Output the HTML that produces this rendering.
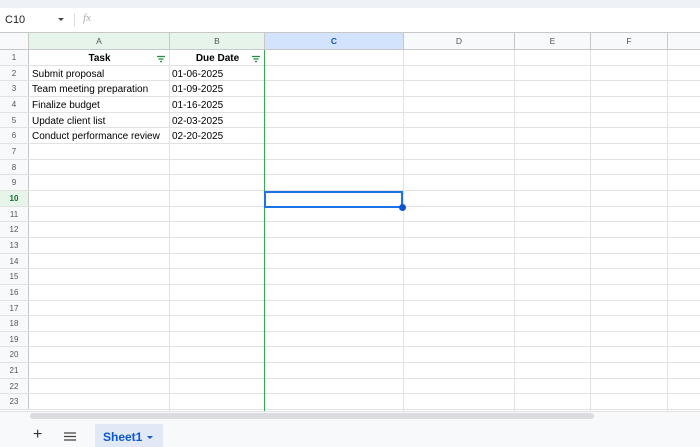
<!DOCTYPE html>
<html><head><meta charset="utf-8"><style>
*{box-sizing:border-box;margin:0;padding:0}
body{width:700px;height:447px;overflow:hidden;background:#fff;font-family:"Liberation Sans",Arial,sans-serif;position:relative}
.top{position:absolute;left:0;top:0;width:700px;height:8px;background:#eef1f6}
.fb{position:absolute;left:0;top:8px;width:700px;height:25px;background:#fff;border-bottom:1px solid #c7c7c7}
.abs{position:absolute}
.rows{position:absolute;left:0;top:50px;width:700px}
.r{height:15.667px;position:relative;border-bottom:1px solid #e2e2e2;font-size:10px;color:#000}
.rn{position:absolute;left:0;top:0;width:29px;height:100%;background:#f8f9fa;border-right:1px solid #c7c7c7;font-size:8px;color:#555;text-align:center;line-height:16px}
.g .rn{background:#e6f4ea}
.c{position:absolute;top:1px;line-height:16px;white-space:nowrap}
.vl{position:absolute;top:33px;height:378px;width:1px;background:#e2e2e2}
.ch{position:absolute;top:33px;height:17px;border-right:1px solid #c7c7c7;border-bottom:1px solid #c7c7c7;background:#f8f9fa;font-size:8.5px;color:#555;text-align:center;line-height:17px}
</style></head><body>
<div class="top"></div>
<div class="fb">
<div class="abs" style="left:5px;top:6px;font-size:11px;color:#222">C10</div>
<div class="abs" style="left:58px;top:10px;width:0;height:0;border-left:3px solid transparent;border-right:3px solid transparent;border-top:3px solid #444"></div>
<div class="abs" style="left:74px;top:5px;width:1px;height:14px;background:#ddd"></div>
<div class="abs" style="left:83px;top:4px;font-size:11px;color:#aaa;font-style:italic;font-family:'Liberation Serif',serif">fx</div>
</div>
<div class="ch" style="left:0;width:29px;background:#f8f9fa"></div>
<div class="ch" style="left:29px;width:141px;background:#e6f4ea">A</div>
<div class="ch" style="left:170px;width:95px;background:#e6f4ea">B</div>
<div class="ch" style="left:265px;width:139px;background:#d3e3fd;color:#0b57d0;font-weight:bold">C</div>
<div class="ch" style="left:404px;width:111px">D</div>
<div class="ch" style="left:515px;width:76px">E</div>
<div class="ch" style="left:591px;width:77px">F</div>
<div class="ch" style="left:668px;width:40px"></div>
<div class="rows">
<div class="r"><div class="rn">1</div><div class="c" style="left:29px;width:141px;text-align:center;font-weight:bold">Task</div><div class="c" style="left:170px;width:95px;text-align:center;font-weight:bold">Due Date</div></div>
<div class="r"><div class="rn">2</div><div class="c" style="left:32px">Submit proposal</div><div class="c" style="left:172px">01-06-2025</div></div>
<div class="r"><div class="rn">3</div><div class="c" style="left:32px">Team meeting preparation</div><div class="c" style="left:172px">01-09-2025</div></div>
<div class="r"><div class="rn">4</div><div class="c" style="left:32px">Finalize budget</div><div class="c" style="left:172px">01-16-2025</div></div>
<div class="r"><div class="rn">5</div><div class="c" style="left:32px">Update client list</div><div class="c" style="left:172px">02-03-2025</div></div>
<div class="r"><div class="rn">6</div><div class="c" style="left:32px">Conduct performance review</div><div class="c" style="left:172px">02-20-2025</div></div>
<div class="r"><div class="rn">7</div></div>
<div class="r"><div class="rn">8</div></div>
<div class="r"><div class="rn">9</div></div>
<div class="r g"><div class="rn" style="color:#146c2e;font-weight:bold">10</div></div>
<div class="r"><div class="rn">11</div></div>
<div class="r"><div class="rn">12</div></div>
<div class="r"><div class="rn">13</div></div>
<div class="r"><div class="rn">14</div></div>
<div class="r"><div class="rn">15</div></div>
<div class="r"><div class="rn">16</div></div>
<div class="r"><div class="rn">17</div></div>
<div class="r"><div class="rn">18</div></div>
<div class="r"><div class="rn">19</div></div>
<div class="r"><div class="rn">20</div></div>
<div class="r"><div class="rn">21</div></div>
<div class="r"><div class="rn">22</div></div>
<div class="r"><div class="rn">23</div></div>
</div>
<div class="vl" style="left:169px;top:50px;height:361px"></div>
<div class="vl" style="left:403px;top:50px;height:361px"></div>
<div class="vl" style="left:514px;top:50px;height:361px"></div>
<div class="vl" style="left:590px;top:50px;height:361px"></div>
<div class="vl" style="left:667px;top:50px;height:361px"></div>
<div class="abs" style="left:264px;top:50px;width:1px;height:361px;background:#34a853"></div>
<svg class="abs" style="left:156px;top:55px" width="10" height="8"><path d="M1 1.5H9M2.5 4H7.5M4 6.5H6" stroke="#1e8e3e" stroke-width="1.2"/></svg>
<svg class="abs" style="left:251px;top:55px" width="10" height="8"><path d="M1 1.5H9M2.5 4H7.5M4 6.5H6" stroke="#1e8e3e" stroke-width="1.2"/></svg>
<div class="abs" style="left:264px;top:191px;width:139px;height:17px;border:2px solid #1a73e8"></div>
<div class="abs" style="left:399px;top:204px;width:7px;height:7px;border-radius:50%;background:#0b57d0"></div>
<div class="abs" style="left:0;top:411px;width:700px;height:9px;background:#f8f9fa;border-top:1px solid #e2e2e2"></div>
<div class="abs" style="left:30px;top:413px;width:564px;height:6px;border-radius:3px;background:#dadce0"></div>
<div class="abs" style="left:0;top:420px;width:700px;height:27px;background:#f8f9fa"></div>
<div class="abs" style="left:33px;top:427px;font-size:16px;color:#333;line-height:16px">+</div>
<svg class="abs" style="left:64px;top:432px" width="12" height="9"><path d="M0 1H12M0 4.5H12M0 8H12" stroke="#444" stroke-width="1.3"/></svg>
<div class="abs" style="left:95px;top:424px;width:68px;height:23px;background:#e1e9f7"></div>
<div class="abs" style="left:103px;top:430px;font-size:12px;font-weight:bold;color:#0b57d0">Sheet1</div>
<div class="abs" style="left:147px;top:436px;width:0;height:0;border-left:3px solid transparent;border-right:3px solid transparent;border-top:3px solid #0b57d0"></div>
</body></html>
